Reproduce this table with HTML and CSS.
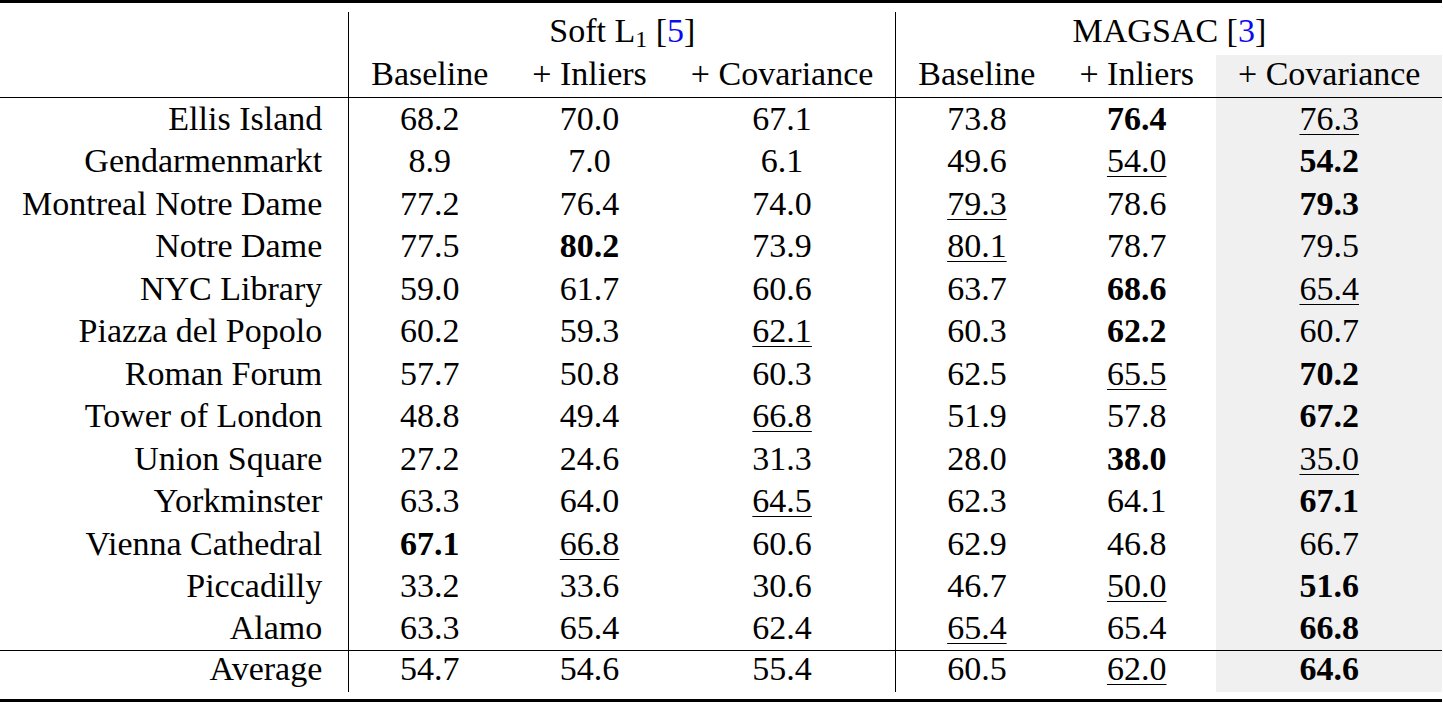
FILE: index.html
```html
<!DOCTYPE html>
<html lang="en">
<head>
<meta charset="utf-8">
<title>Results table</title>
<link rel="stylesheet" href="styles.css">
</head>
<body>
<div class="wrap">
<table class="results">
<thead>
<tr class="group">
<th class="name"></th>
<th class="vl" colspan="3">Soft L<sub class="sub">1</sub> [<span class="cite">5</span>]</th>
<th class="vl" colspan="3">MAGSAC [<span class="cite">3</span>]</th>
</tr>
<tr class="cols">
<th class="name"></th>
<th class="vl">Baseline</th>
<th>+ Inliers</th>
<th>+ Covariance</th>
<th class="vl">Baseline</th>
<th>+ Inliers</th>
<th class="hl">+ Covariance</th>
</tr>
</thead>
<tbody>
<tr><td class="name">Ellis Island</td><td class="vl">68.2</td><td>70.0</td><td>67.1</td><td class="vl">73.8</td><td><b>76.4</b></td><td class="hl"><u>76.3</u></td></tr>
<tr><td class="name">Gendarmenmarkt</td><td class="vl">8.9</td><td>7.0</td><td>6.1</td><td class="vl">49.6</td><td><u>54.0</u></td><td class="hl"><b>54.2</b></td></tr>
<tr><td class="name">Montreal Notre Dame</td><td class="vl">77.2</td><td>76.4</td><td>74.0</td><td class="vl"><u>79.3</u></td><td>78.6</td><td class="hl"><b>79.3</b></td></tr>
<tr><td class="name">Notre Dame</td><td class="vl">77.5</td><td><b>80.2</b></td><td>73.9</td><td class="vl"><u>80.1</u></td><td>78.7</td><td class="hl">79.5</td></tr>
<tr><td class="name">NYC Library</td><td class="vl">59.0</td><td>61.7</td><td>60.6</td><td class="vl">63.7</td><td><b>68.6</b></td><td class="hl"><u>65.4</u></td></tr>
<tr><td class="name">Piazza del Popolo</td><td class="vl">60.2</td><td>59.3</td><td><u>62.1</u></td><td class="vl">60.3</td><td><b>62.2</b></td><td class="hl">60.7</td></tr>
<tr><td class="name">Roman Forum</td><td class="vl">57.7</td><td>50.8</td><td>60.3</td><td class="vl">62.5</td><td><u>65.5</u></td><td class="hl"><b>70.2</b></td></tr>
<tr><td class="name">Tower of London</td><td class="vl">48.8</td><td>49.4</td><td><u>66.8</u></td><td class="vl">51.9</td><td>57.8</td><td class="hl"><b>67.2</b></td></tr>
<tr><td class="name">Union Square</td><td class="vl">27.2</td><td>24.6</td><td>31.3</td><td class="vl">28.0</td><td><b>38.0</b></td><td class="hl"><u>35.0</u></td></tr>
<tr><td class="name">Yorkminster</td><td class="vl">63.3</td><td>64.0</td><td><u>64.5</u></td><td class="vl">62.3</td><td>64.1</td><td class="hl"><b>67.1</b></td></tr>
<tr><td class="name">Vienna Cathedral</td><td class="vl"><b>67.1</b></td><td><u>66.8</u></td><td>60.6</td><td class="vl">62.9</td><td>46.8</td><td class="hl">66.7</td></tr>
<tr><td class="name">Piccadilly</td><td class="vl">33.2</td><td>33.6</td><td>30.6</td><td class="vl">46.7</td><td><u>50.0</u></td><td class="hl"><b>51.6</b></td></tr>
<tr><td class="name">Alamo</td><td class="vl">63.3</td><td>65.4</td><td>62.4</td><td class="vl"><u>65.4</u></td><td>65.4</td><td class="hl"><b>66.8</b></td></tr>
<tr class="avg"><td class="name">Average</td><td class="vl">54.7</td><td>54.6</td><td>55.4</td><td class="vl">60.5</td><td><u>62.0</u></td><td class="hl"><b>64.6</b></td></tr>
</tbody>
</table>
</div>
</body>
</html>
```
FILE: styles.css
```css
html, body {
  margin: 0;
  padding: 0;
  background: #ffffff;
}

body {
  font-family: "Liberation Serif", "Times New Roman", serif;
  font-size: 34px;
  color: #000000;
}

.wrap {
  width: fit-content;
  border-top: 3px solid #000000;
  border-bottom: 3px solid #000000;
  padding-top: 9px;
  padding-bottom: 7px;
}

.results {
  border-collapse: separate;
  border-spacing: 0;
}

.results th,
.results td {
  font-weight: normal;
  padding: 0 22px;
  text-align: center;
  white-space: nowrap;
  line-height: 42.46px;
}

.results .name {
  text-align: right;
  padding-right: 26px;
}

.results .vl {
  border-left: 1px solid #000000;
}

.results .hl {
  background: #f0f0f0;
}

.group th {
  line-height: 37px;
  padding-bottom: 6px;
}

.cols th {
  line-height: 37px;
  padding-bottom: 5px;
  border-bottom: 1px solid #000000;
}

.avg td {
  border-top: 1px solid #000000;
  line-height: 35px;
  padding-bottom: 6px;
}

.sub {
  font-size: 24px;
  line-height: 0;
  vertical-align: -5px;
}

.cite {
  color: #0b0bf0;
}

.results b {
  font-weight: bold;
}

.results u {
  text-decoration: underline;
  text-decoration-thickness: 1px;
  text-underline-offset: 4px;
}
```
